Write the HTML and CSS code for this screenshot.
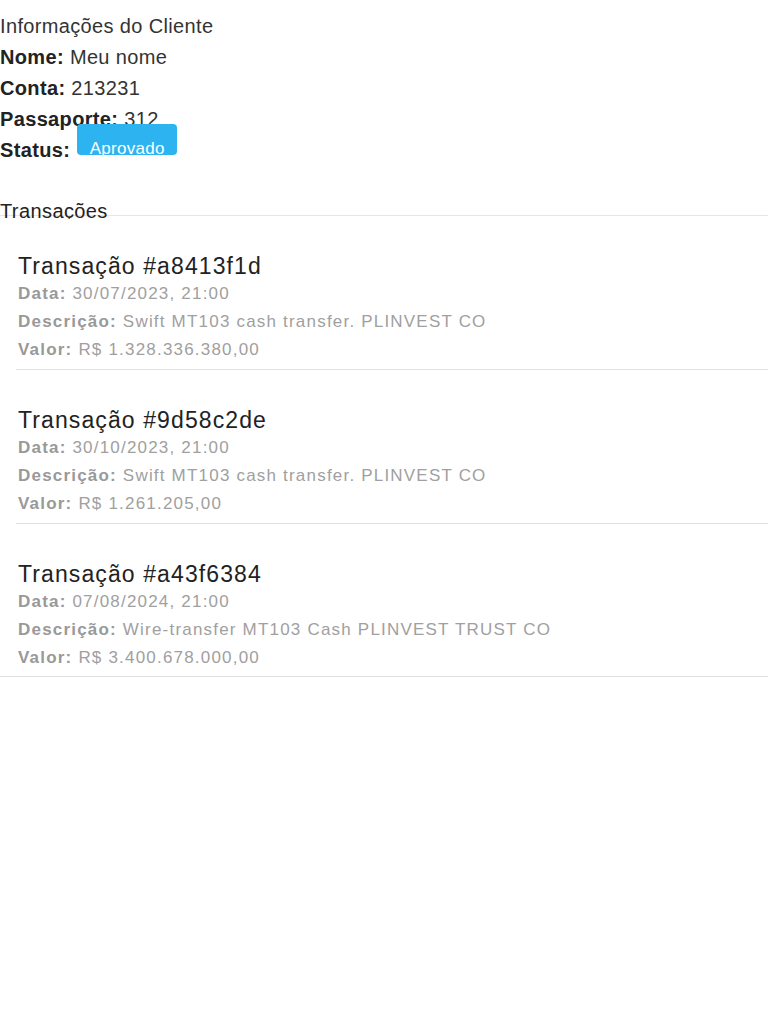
FILE: index.html
```html
<!DOCTYPE html>
<html lang="pt-BR">
<head>
  <meta charset="UTF-8" />
  <meta name="viewport" content="width=device-width, initial-scale=1.0" />
  <title>Cliente</title>
  <link rel="stylesheet" href="styles.css">
</head>
<body>
  <div class="cliente">
    <div class="linha">Informações do Cliente</div>
    <div class="linha"><b>Nome:</b> Meu nome</div>
    <div class="linha"><b>Conta:</b> 213231</div>
    <div class="linha"><b>Passaporte:</b> 312</div>
    <div class="linha status">
      <b>Status:</b>
      <span class="badge">Aprovado</span>
    </div>
  </div>

  <div class="titulo-secao">Transações</div>
  <div class="lista">
    <div class="item">
      <div class="item-inner">
        <h2>Transação #a8413f1d</h2>
        <p><b>Data:</b> 30/07/2023, 21:00</p>
        <p><b>Descrição:</b> Swift MT103 cash transfer. PLINVEST CO</p>
        <p><b>Valor:</b> R$ 1.328.336.380,00</p>
      </div>
    </div>
    <div class="item">
      <div class="item-inner">
        <h2>Transação #9d58c2de</h2>
        <p><b>Data:</b> 30/10/2023, 21:00</p>
        <p><b>Descrição:</b> Swift MT103 cash transfer. PLINVEST CO</p>
        <p><b>Valor:</b> R$ 1.261.205,00</p>
      </div>
    </div>
    <div class="item">
      <div class="item-inner">
        <h2>Transação #a43f6384</h2>
        <p><b>Data:</b> 07/08/2024, 21:00</p>
        <p><b>Descrição:</b> Wire-transfer MT103 Cash PLINVEST TRUST CO</p>
        <p><b>Valor:</b> R$ 3.400.678.000,00</p>
      </div>
    </div>
  </div>
</body>
</html>
```

FILE: styles.css
```css
body {
  margin: 0;
  font-family: "Liberation Sans", Arial, sans-serif;
  color: #222;
  background: #fff;
}
.cliente {
  padding-top: 11px;
  font-size: 20px;
  letter-spacing: 0.35px;
  color: #333;
}
.linha {
  line-height: 31px;
  height: 31px;
}
.linha b {
  color: #222;
}
.status {
  display: flex;
  align-items: flex-start;
}
.badge {
  display: block;
  box-sizing: border-box;
  width: 100px;
  height: 31px;
  margin: -11px 0 0 7px;
  padding-top: 17px;
  overflow: hidden;
  border-radius: 4px;
  background: #2db4f0;
  color: #fff;
  font-size: 17px;
  letter-spacing: 0.3px;
  line-height: 16px;
  text-align: center;
}
.titulo-secao {
  margin-top: 30px;
  height: 23px;
  margin-bottom: -4px;
  overflow: hidden;
  font-size: 20px;
  letter-spacing: 0.4px;
  line-height: 31px;
  color: #222;
}
.lista {
  border-top: 1px solid #e6e6e6;
  border-bottom: 1px solid #e0e0e0;
}
.item {
  padding-left: 16px;
}
.item-inner {
  padding: 36px 0 5px 2px;
  border-bottom: 1px solid #e0e0e0;
}
.item:last-child .item-inner {
  border-bottom: none;
  padding-bottom: 4px;
}
h2 {
  margin: 0;
  font-size: 23px;
  font-weight: normal;
  letter-spacing: 1.1px;
  line-height: 28px;
  color: #222;
}
p {
  margin: 0;
  font-size: 17px;
  letter-spacing: 1.2px;
  line-height: 28px;
  color: #a0a0a0;
}
p b {
  color: #999;
}
```
